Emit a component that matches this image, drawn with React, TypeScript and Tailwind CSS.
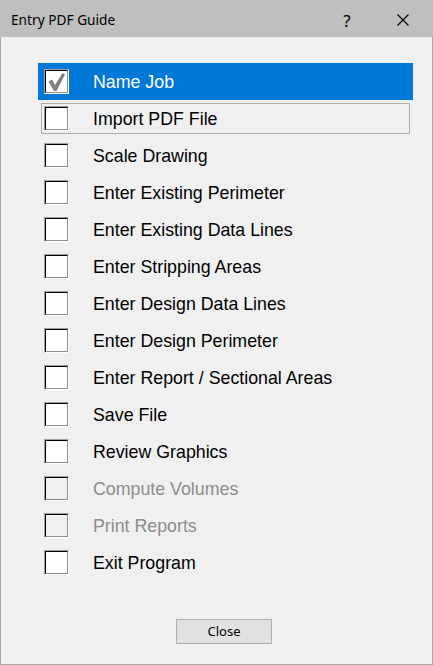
import React from 'react';

const steps: { label: string; disabled?: boolean }[] = [
    { label: 'Name Job' },
    { label: 'Import PDF File' },
    { label: 'Scale Drawing' },
    { label: 'Enter Existing Perimeter' },
    { label: 'Enter Existing Data Lines' },
    { label: 'Enter Stripping Areas' },
    { label: 'Enter Design Data Lines' },
    { label: 'Enter Design Perimeter' },
    { label: 'Enter Report / Sectional Areas' },
    { label: 'Save File' },
    { label: 'Review Graphics' },
    { label: 'Compute Volumes', disabled: true },
    { label: 'Print Reports', disabled: true },
    { label: 'Exit Program' },
];

function CheckBox({ checked, disabled }: { checked?: boolean; disabled?: boolean }) {
    return (
        <div className="w-[25px] h-[25px] border-t border-l border-[#a0a0a0] border-b border-r border-b-white border-r-white">
            <div
                className={`w-full h-full border-t border-l border-black border-b border-r border-b-[#8f8f8f] border-r-[#8f8f8f] flex items-center justify-center ${
                    disabled ? 'bg-[#f0f0f0]' : 'bg-white'
                }`}
            >
                {checked && (
                    <svg width="19" height="20" viewBox="0 0 19 20">
                        <path d="M1.5 9.5 L5 7.5 L8 13 L15.5 1 L18 2.5 L9.5 19 L7 19 Z" fill="#7f7f7f" />
                    </svg>
                )}
            </div>
        </div>
    );
}

export default function App() {
    return (
        <div
            className="w-[433px] h-[665px] bg-[#f0f0f0] border-l border-r border-b border-[#a8a8a8] flex flex-col"
            style={{ fontFamily: "'Liberation Sans', Arial, sans-serif" }}
        >
            {/* Title bar */}
            <div className="h-[37px] bg-[#bfbfbf] flex items-center shrink-0 -mx-px">
                <span
                    className="pl-[11px] pt-[4px] text-[13.7px] text-black"
                    style={{ fontFamily: "'Noto Sans', 'Liberation Sans', sans-serif" }}
                >
                    Entry PDF Guide
                </span>
                <span
                    className="ml-auto w-[16px] pt-[3px] text-center text-[17px] leading-none text-black"
                    style={{ fontFamily: "'Noto Sans', sans-serif" }}
                >
                    ?
                </span>
                <div className="w-[58px] ml-[20px] pr-[2px] pt-[2px] flex justify-center">
                    <svg width="12" height="12" viewBox="0 0 12 12">
                        <path d="M0.5 0.5 L11.5 11.5 M11.5 0.5 L0.5 11.5" stroke="#000" strokeWidth="1.1" />
                    </svg>
                </div>
            </div>

            {/* Steps */}
            <div className="flex flex-col pt-[26px] pl-[37px] pr-[19px]">
                {steps.map((s, i) => {
                    const selected = i === 0;
                    const focused = i === 1;
                    return (
                        <div key={s.label} className={`h-[37px] flex items-center ${selected ? 'bg-[#0078d7]' : ''}`}>
                            <div
                                className={`w-full h-[31px] mx-[3px] flex items-center border ${
                                    focused ? 'border-[#adadad]' : 'border-transparent'
                                }`}
                            >
                                <div className="ml-[2px]">
                                    <CheckBox checked={selected} disabled={s.disabled} />
                                </div>
                                <span
                                    className={`ml-[24px] pt-[2px] text-[17.8px] ${
                                        selected ? 'text-white' : s.disabled ? 'text-[#8d8d8d]' : 'text-black'
                                    }`}
                                >
                                    {s.label}
                                </span>
                            </div>
                        </div>
                    );
                })}
            </div>

            {/* Footer */}
            <div className="mt-auto flex justify-center pb-[20px] pl-[15px]">
                <button
                    className="w-[96px] h-[25px] bg-[#e1e1e1] border border-[#adadad] text-[13px] text-black"
                    style={{ fontFamily: "'Noto Sans', 'Liberation Sans', sans-serif" }}
                >
                    Close
                </button>
            </div>
        </div>
    );
}
